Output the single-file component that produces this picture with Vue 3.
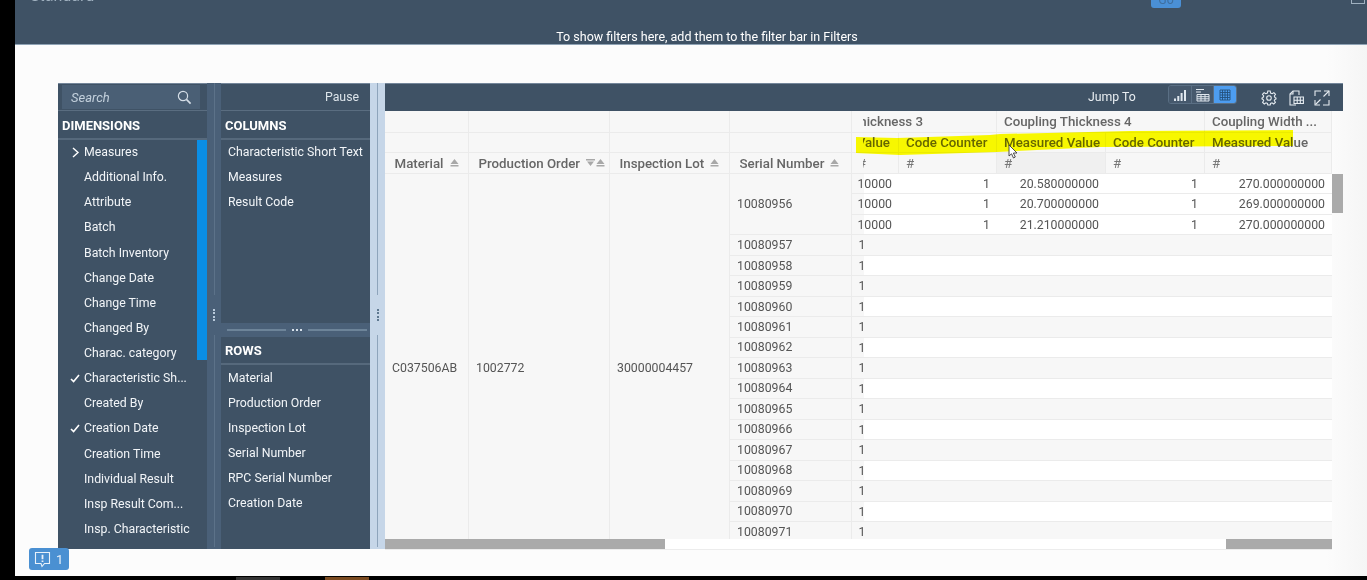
<script setup>
const dimensions = [
  { name: "Measures", mark: "arrow" },
  { name: "Additional Info." },
  { name: "Attribute" },
  { name: "Batch" },
  { name: "Batch Inventory" },
  { name: "Change Date" },
  { name: "Change Time" },
  { name: "Changed By" },
  { name: "Charac. category" },
  { name: "Characteristic Sh...", mark: "check" },
  { name: "Created By" },
  { name: "Creation Date", mark: "check" },
  { name: "Creation Time" },
  { name: "Individual Result" },
  { name: "Insp Result Com..." },
  { name: "Insp. Characteristic" },
];
const columns = ["Characteristic Short Text", "Measures", "Result Code"];
const rows = [
  "Material",
  "Production Order",
  "Inspection Lot",
  "Serial Number",
  "RPC Serial Number",
  "Creation Date",
];
const frozenHeads = [
  { name: "Material" },
  { name: "Production Order", filter: true },
  { name: "Inspection Lot" },
  { name: "Serial Number" },
];
const measured = [
  ["20.580000000", "270.000000000"],
  ["20.700000000", "269.000000000"],
  ["21.210000000", "270.000000000"],
];
const serials = [];
for (let s = 10080957; s <= 10080971; s++) serials.push(s);
</script>

<template>
  <div class="page">
    <header class="topbar">
      <div class="topbar-cut">
        <span class="cut-title">Standard</span>
        <span class="cut-grow"></span>
        <span class="cut-go">Go</span>
        <span class="cut-link cut-show">Show Filter Bar</span>
        <span class="cut-link cut-filters">Filters</span>
        <span class="cut-box"></span>
      </div>
      <div class="topbar-msg">To show filters here, add them to the filter bar in Filters</div>
    </header>

    <main class="content">
      <section class="board">
        <div class="side">
          <div class="side-head">
            <div class="search">
              <span>Search</span>
              <svg width="15" height="15" viewBox="0 0 15 15" fill="none" stroke="#d5dee7" stroke-width="1.2">
                <circle cx="6" cy="6" r="4.6" />
                <path d="M9.4 9.4 L13.6 13.6" stroke-width="1.6" />
              </svg>
            </div>
          </div>
          <h3 class="side-title">DIMENSIONS</h3>
          <div class="dim-body">
            <ul class="dim-list">
              <li v-for="d in dimensions" :key="d.name">
                <span class="dim-mark">
                  <svg v-if="d.mark == 'arrow'" width="9" height="11" viewBox="0 0 9 11" fill="none" stroke="#fff" stroke-width="1.4">
                    <path d="M2 1 L7 5.5 L2 10" />
                  </svg>
                  <svg v-if="d.mark == 'check'" width="10" height="9" viewBox="0 0 10 9" fill="none" stroke="#fff" stroke-width="1.6">
                    <path d="M1 5 L3.6 7.6 L9 1" />
                  </svg>
                </span>
                <span>{{ d.name }}</span>
              </li>
            </ul>
            <div class="dim-scroll"></div>
          </div>
        </div>

        <div class="strip">
          <span class="strip-line"></span>
          <span class="strip-dots"></span>
          <span class="strip-line"></span>
        </div>

        <div class="side">
          <div class="side-head pause">Pause</div>
          <h3 class="side-title">COLUMNS</h3>
          <ul class="field-list field-cols">
            <li v-for="c in columns" :key="c">{{ c }}</li>
          </ul>
          <div class="split">
            <span class="split-line"></span>
            <span class="split-dots"></span>
            <span class="split-line"></span>
          </div>
          <h3 class="side-title side-title-rows">ROWS</h3>
          <ul class="field-list field-rows">
            <li v-for="r in rows" :key="r">{{ r }}</li>
          </ul>
        </div>

        <div class="strip strip-light">
          <span class="strip-line"></span>
          <span class="strip-dots"></span>
          <span class="strip-line"></span>
        </div>

        <div class="report">
          <div class="toolbar">
            <span class="jump">Jump To</span>
            <div class="segment">
              <button class="seg-btn">
                <svg width="14" height="14" viewBox="0 0 14 14" fill="#dfe7ee">
                  <rect x="1" y="10.500" width="2" height="2.500" />
                  <rect x="4.300" y="8" width="2" height="5" />
                  <rect x="7.600" y="5" width="2" height="8" />
                  <rect x="11" y="2" width="2" height="11" />
                </svg>
              </button>
              <button class="seg-btn">
                <svg width="15" height="14" viewBox="0 0 15 14" fill="none" stroke="#dfe7ee">
                  <path d="M1 1.500 H9 M1 4 H6" />
                  <path d="M2 6.500 H14 V13 H2 Z M2 8.700 H14 M2 10.800 H14 M6 6.500 V13 M10 6.500 V13" />
                </svg>
              </button>
              <button class="seg-btn seg-on">
                <svg width="12" height="12" viewBox="0 0 12 12" fill="none" stroke="#24507c" stroke-width="0.9">
                  <path d="M1 1 H11 V11 H1 Z M1 3.500 H11 M1 6 H11 M1 8.500 H11 M3.500 1 V11 M6 1 V11 M8.500 1 V11" />
                </svg>
              </button>
            </div>
            <div class="tools">
              <svg width="16" height="16" viewBox="0 0 16 16" fill="none" stroke="#e6ecf1" stroke-width="1.1">
                <circle cx="8" cy="8" r="2.300" />
                <path d="M6.800 1 H9.200 L9.600 3 L11.200 3.700 L12.900 2.600 L14.500 4.300 L13.300 6 L14 7.500 L15 8 V9 L14 9.500 L13.300 10.500 L14.400 12.300 L12.700 14 L11 12.800 L9.600 13.400 L9.200 15 H6.800 L6.400 13.400 L5 12.800 L3.300 14 L1.600 12.300 L2.700 10.500 L2 9.500 L1 9 V8 L2 7.500 L2.700 6 L1.500 4.300 L3.100 2.600 L4.800 3.700 L6.400 3 Z" />
              </svg>
              <svg width="16" height="16" viewBox="0 0 16 16" fill="none" stroke="#e6ecf1" stroke-width="1.1">
                <path d="M8 15 H2 V4 L5 1 H11 V5" />
                <path d="M2 4 H5 V1" />
                <path d="M6 7 H15.400 V13.500 H6 Z M6 10.200 H15.400 M9.200 7 V13.500 M12.300 7 V13.500" />
              </svg>
              <svg width="16" height="16" viewBox="0 0 16 16" fill="none" stroke="#e6ecf1" stroke-width="1.1">
                <path d="M7 1 H1 V6 M9 15 H15 V10 M1 10 V15 H6 M10 1 H15 V6" />
                <path d="M9.500 6.500 L15 1 M6.500 9.500 L1.500 14.500" />
              </svg>
            </div>
          </div>

          <div class="table-wrap">
            <div class="table-col">
              <div class="table">
                <template v-for="n in 4" :key="'a' + n">
                  <div class="th th-blank"></div>
                </template>
                <div class="th th-group span2">
                  <div class="clip clip-group"><span>Coupling Thickness 3</span></div>
                </div>
                <div class="th th-group span2">Coupling Thickness 4</div>
                <div class="th th-group">Coupling Width ...</div>

                <template v-for="n in 4" :key="'b' + n">
                  <div class="th th-blank"></div>
                </template>
                <div class="th">
                  <div class="clip clip-value"><span>Measured Value</span></div>
                </div>
                <div class="th">Code Counter</div>
                <div class="th">Measured Value</div>
                <div class="th">Code Counter</div>
                <div class="th">Measured Value</div>

                <div v-for="h in frozenHeads" :key="h.name" class="th th-sort">
                  {{ h.name }}
                  <span class="sort">
                    <svg v-if="h.filter" width="9" height="8" viewBox="0 0 9 8" fill="#a8a8a8">
                      <path d="M0 0 H9 V1.500 H0 Z M1 2.500 H8 L4.500 7 Z" />
                    </svg>
                    <svg width="9" height="8" viewBox="0 0 9 8" fill="#a8a8a8">
                      <path d="M4.500 0 L8.500 5 H0.500 Z M0.500 6 H8.500 V7.500 H0.500 Z" />
                    </svg>
                  </span>
                </div>
                <div class="th th-unit"><div class="clip clip-unit"><span>#</span></div></div>
                <div class="th th-unit">#</div>
                <div class="th th-unit th-hover">#</div>
                <div class="th th-unit">#</div>
                <div class="th th-unit">#</div>

                <div class="td td-key span19"><span>C037506AB</span></div>
                <div class="td td-key span19"><span>1002772</span></div>
                <div class="td td-key span19"><span>30000004457</span></div>
                <div class="td td-key span3"><span>10080956</span></div>

                <template v-for="m in measured" :key="m[0]">
                  <div class="td td-num td-edge">10000</div>
                  <div class="td td-num td-white">1</div>
                  <div class="td td-num td-white">{{ m[0] }}</div>
                  <div class="td td-num td-white">1</div>
                  <div class="td td-num td-white">{{ m[1] }}</div>
                </template>

                <template v-for="(s, i) in serials" :key="s">
                  <div class="td td-key">{{ s }}</div>
                  <div class="td td-one" :class="{ 'td-edge': i % 2 == 1 }">1</div>
                  <div class="td td-rest" :class="{ 'td-white': i % 2 == 1 }"></div>
                </template>
              </div>

              <svg class="marker" viewBox="385 111 947 428">
                <path d="M856 137 L897 138 L990 135 L1000 134 L1130 131 L1293 130 L1293 146 L1100 147 L997 152 L900 155 L856 153 Z" fill="#ffff00" />
              </svg>
              <svg class="cursor" width="11" height="15" viewBox="0 0 11 15">
                <path d="M1 1 V12 L3.500 9.800 L5.500 14 L7.300 13 L5.400 9 L9 9 Z" fill="#fff" stroke="#3a3a3a" stroke-width="0.9" />
              </svg>

              <div class="hscroll">
                <span class="hs-thumb hs-a"></span>
                <span class="hs-track"></span>
                <span class="hs-thumb hs-b"></span>
              </div>
            </div>
            <div class="vscroll"><span class="vs-thumb"></span></div>
          </div>
        </div>
      </section>
      <button class="msg-btn">
        <svg width="17" height="17" viewBox="0 0 17 17" fill="none" stroke="#e8f1fa" stroke-width="1.1">
          <path d="M1.500 1.500 H15.500 V12.500 H10.500 L8 15.500 L7 12.500 H1.500 Z" />
          <path d="M8.500 3.800 V8.300 M8.500 9.600 V11" stroke-width="1.800" />
        </svg>
        <span>1</span>
      </button>
    </main>

    <footer class="taskbar">
      <span class="task task-dark"></span>
      <span class="task task-brown"></span>
    </footer>
  </div>
</template>

<style>
html,
body {
  margin: 0;
  background: #000;
  overflow: hidden;
}
</style>

<style scoped>
.page {
  width: 1367px;
  height: 580px;
  background: #000;
  padding-left: 15px;
  box-sizing: border-box;
  display: flex;
  flex-direction: column;
  font-family: Roboto, "Liberation Sans", sans-serif;
  font-size: 12.300px;
  position: relative;
  overflow: hidden;
}

.topbar {
  height: 45px;
  flex: none;
  background: #3f5265;
  border-bottom: 1px solid #8fa3b5;
  box-sizing: border-box;
  color: #fff;
}

.topbar-cut {
  height: 8px;
  display: flex;
  overflow: hidden;
  padding: 0 2px 0 15px;
  color: #9fb0bf;
}

.cut-title {
  margin-top: -14px;
  font-size: 16px;
}

.cut-grow {
  flex: 1;
}

.cut-go {
  width: 30px;
  height: 8px;
  background: #4a90d6;
  border-radius: 0 0 3px 3px;
  color: #3f6f9f;
  text-align: center;
  line-height: 0;
}

.cut-link {
  margin-top: -12px;
  font-size: 12.300px;
  white-space: nowrap;
}

.cut-show {
  width: 82px;
  margin-left: 15px;
}

.cut-filters {
  width: 34px;
  margin-left: 22px;
}

.cut-box {
  width: 12px;
  height: 3px;
  margin-left: 17px;
  border: 1px solid #9fb0bf;
  border-top: 0;
}

.topbar-msg {
  text-align: center;
  margin-top: 21px;
  padding-left: 32px;
  font-size: 12.500px;
  line-height: 16px;
}

.content {
  flex: 1;
  background: linear-gradient(90deg, #fcfcfc 97%, #f5f5f5 100%);
  padding: 38px 0 0 43px;
  position: relative;
  min-height: 0;
}

.board {
  width: 1285px;
  height: 466px;
  display: flex;
}

.side {
  width: 149px;
  flex: none;
  background: #3f5265;
  border-top: 1px solid #74869a;
  box-sizing: border-box;
  color: #f2f5f8;
  display: flex;
  flex-direction: column;
  overflow: hidden;
}

.side-head {
  height: 27px;
  flex: none;
  padding: 1px 7px 2px 4px;
  box-sizing: border-box;
  border-bottom: 1px solid #5a6d80;
}

.search {
  height: 24px;
  width: 138px;
  background: #4a5f75;
  display: flex;
  align-items: center;
  justify-content: space-between;
  padding: 0 8px 0 9px;
  box-sizing: border-box;
  font-size: 13px;
  font-style: italic;
  color: #c3d0dc;
}

.pause {
  text-align: right;
  line-height: 26px;
  padding: 0 11px 0 0;
  color: #dce4ea;
}

.side-title {
  height: 29px;
  flex: none;
  margin: 0;
  padding-left: 4px;
  border-bottom: 2px solid #56697c;
  box-sizing: border-box;
  font-size: 13px;
  font-weight: 700;
  line-height: 29px;
  color: #fff;
}

.side-title-rows {
  height: 28px;
  line-height: 27px;
}

.dim-body {
  flex: 1;
  display: flex;
  min-height: 0;
}

.dim-list {
  flex: 1;
  margin: 0;
  padding: 0;
  list-style: none;
}

.dim-list li {
  height: 25.130px;
  line-height: 25px;
  display: flex;
  white-space: nowrap;
}

.dim-mark {
  width: 26px;
  flex: none;
  display: flex;
  align-items: center;
  justify-content: flex-end;
  padding-right: 4px;
  box-sizing: border-box;
}

.dim-scroll {
  width: 10px;
  height: 220px;
  flex: none;
  background: #0a8ee6;
}

.strip {
  width: 14px;
  flex: none;
  background: #4a6078;
  display: flex;
  flex-direction: column;
  align-items: center;
  padding: 0 0 2px;
  box-sizing: border-box;
}

.strip-light {
  width: 15px;
  background: #c6d6e8;
}

.strip-line {
  flex: 1;
  width: 1px;
  background: #6d8499;
  opacity: 0.5;
}

.strip-light .strip-line {
  background: #8ea4bb;
  opacity: 1;
}

.strip-dots {
  height: 12px;
  margin: 14px 0;
  border-left: 2px dotted #b9cadb;
}

.strip-light .strip-dots {
  border-left-color: #5e7890;
}

.field-list {
  margin: 0;
  padding: 0 0 0 7px;
  list-style: none;
  white-space: nowrap;
}

.field-list li {
  height: 25.100px;
  line-height: 25px;
}

.field-cols {
  height: 183px;
  flex: none;
}

.field-rows {
  flex: 1;
  padding-top: 1px;
}

.split {
  height: 14px;
  flex: none;
  background: #4a6078;
  display: flex;
  align-items: center;
  gap: 6px;
  padding: 0 3px 0 6px;
}

.split-line {
  flex: 1;
  height: 2px;
  background: #6d8499;
}

.split-dots {
  width: 10px;
  border-top: 2px dotted #d5e0ea;
}

.report {
  flex: 1;
  min-width: 0;
  display: flex;
  flex-direction: column;
}

.toolbar {
  height: 28px;
  flex: none;
  background: #3f5265;
  border-top: 1px solid #74869a;
  box-sizing: border-box;
  display: flex;
  align-items: center;
  color: #e9eef2;
}

.jump {
  margin: -2px 0 0 703px;
  width: 80px;
}

.segment {
  height: 19px;
  width: 69px;
  margin-top: -6px;
  display: flex;
  border: 1px solid #5a6f84;
  border-radius: 3px;
  box-sizing: border-box;
  overflow: hidden;
}

.seg-btn {
  flex: 1;
  border: 0;
  padding: 0;
  background: #46596d;
  border-right: 1px solid #5a6f84;
  display: flex;
  align-items: center;
  justify-content: center;
}

.seg-on {
  background: #4d9df0;
  border-right: 0;
}

.tools {
  display: flex;
  gap: 10.500px;
  margin-left: 24px;
}

.table-wrap {
  flex: 1;
  display: flex;
  min-height: 0;
}

.table-col {
  width: 947px;
  flex: none;
  position: relative;
  display: flex;
  flex-direction: column;
}

.table {
  height: 428px;
  flex: none;
  overflow: hidden;
  display: grid;
  grid-template-columns: 84px 141px 120px 122px 47px 98px 109px 99px 127px;
  grid-template-rows: 22px 20px 21px;
  grid-auto-rows: 20.470px;
  background: #f7f7f7;
  color: #555;
}

.th {
  border-right: 1px solid #ebebeb;
  border-bottom: 1px solid #ebebeb;
  box-sizing: border-box;
  display: flex;
  align-items: center;
  padding-left: 7px;
  font-size: 13.300px;
  font-weight: 500;
  color: #666;
  white-space: nowrap;
  overflow: hidden;
}

.th-sort {
  gap: 6px;
  padding-left: 9.500px;
}

.sort {
  display: flex;
  gap: 1px;
}

.th-unit {
  font-weight: 400;
  color: #777;
}

.th-hover {
  background: #f0f0f0;
}

.span2 {
  grid-column: span 2;
}

.span3 {
  grid-row: span 3;
}

.span19 {
  grid-row: span 19;
}

.clip {
  display: flex;
  justify-content: flex-end;
  overflow: hidden;
  white-space: nowrap;
}

.clip-group {
  width: 60px;
  margin-left: 4px;
}

.clip-value {
  width: 27px;
  margin-left: 4px;
}

.clip-unit {
  width: 3px;
  margin-left: 4px;
}

.td {
  border-bottom: 1px solid #ebebeb;
  box-sizing: border-box;
  line-height: 21px;
  white-space: nowrap;
  overflow: hidden;
}

.td-key {
  border-right: 1px solid #ebebeb;
  padding: 1px 0 0 7px;
  display: flex;
  align-items: center;
}

.td-num {
  text-align: right;
  padding-right: 7px;
}

.td-white {
  background: #fff;
}

.td-edge {
  background: linear-gradient(90deg, #f7f7f7 12px, #fff 12px);
}

.td-one {
  padding-left: 6.500px;
}

.td-rest {
  grid-column: span 4;
}

.marker {
  position: absolute;
  left: 0;
  top: 0;
  width: 947px;
  height: 428px;
  mix-blend-mode: multiply;
  pointer-events: none;
}

.cursor {
  position: absolute;
  left: 623px;
  top: 33px;
  pointer-events: none;
}

.hscroll {
  height: 10px;
  flex: none;
  display: flex;
  background: #fff;
  border-bottom: 1px solid #ececec;
}

.hs-thumb {
  background: #aaa;
}

.hs-a {
  width: 280px;
}

.hs-track {
  flex: 1;
}

.hs-b {
  width: 106px;
}

.vscroll {
  width: 11px;
  flex: none;
  padding-top: 63px;
  background: transparent;
}

.vs-thumb {
  display: block;
  height: 39px;
  background: #aaa;
}

.msg-btn {
  position: absolute;
  left: 14px;
  top: 503px;
  width: 40px;
  height: 22px;
  border: 0;
  border-radius: 3px;
  padding: 0 0 0 5px;
  background: #4a90d2;
  color: #e8f1fa;
  font-family: inherit;
  font-size: 13px;
  display: flex;
  align-items: center;
  gap: 5px;
}

.taskbar {
  height: 4px;
  flex: none;
  background: #000;
  display: flex;
  padding-left: 221px;
  gap: 45px;
}

.task {
  width: 44px;
  height: 3px;
  margin-top: 1px;
}

.task-dark {
  background: #333;
}

.task-brown {
  background: #7a4a20;
}
</style>
